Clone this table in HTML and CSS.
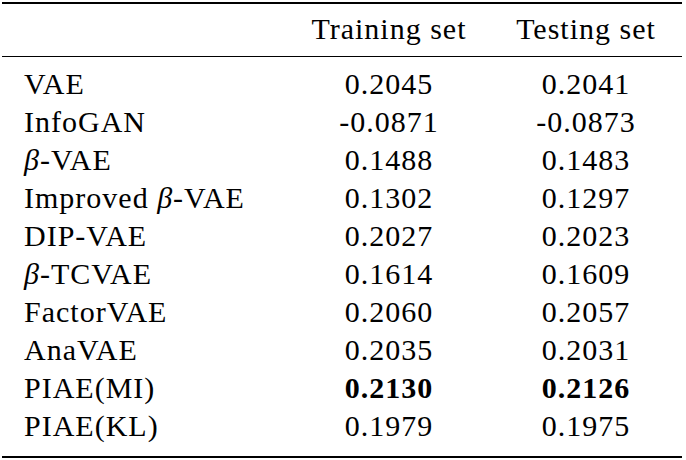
FILE: index.html
```html
<!DOCTYPE html>
<html>
<head>
<meta charset="utf-8">
<link rel="stylesheet" href="styles.css">
</head>
<body>
<div class="results">
  <div class="row head">
    <span class="cell name"></span>
    <span class="cell train">Training set</span>
    <span class="cell test">Testing set</span>
  </div>
  <div class="body">
    <div class="row"><span class="cell name">VAE</span><span class="cell train">0.2045</span><span class="cell test">0.2041</span></div>
    <div class="row"><span class="cell name">InfoGAN</span><span class="cell train">-0.0871</span><span class="cell test">-0.0873</span></div>
    <div class="row"><span class="cell name"><span class="beta">β</span>-VAE</span><span class="cell train">0.1488</span><span class="cell test">0.1483</span></div>
    <div class="row"><span class="cell name">Improved <span class="beta">β</span>-VAE</span><span class="cell train">0.1302</span><span class="cell test">0.1297</span></div>
    <div class="row"><span class="cell name">DIP-VAE</span><span class="cell train">0.2027</span><span class="cell test">0.2023</span></div>
    <div class="row"><span class="cell name"><span class="beta">β</span>-TCVAE</span><span class="cell train">0.1614</span><span class="cell test">0.1609</span></div>
    <div class="row"><span class="cell name">FactorVAE</span><span class="cell train">0.2060</span><span class="cell test">0.2057</span></div>
    <div class="row"><span class="cell name">AnaVAE</span><span class="cell train">0.2035</span><span class="cell test">0.2031</span></div>
    <div class="row"><span class="cell name">PIAE(MI)</span><span class="cell train best">0.2130</span><span class="cell test best">0.2126</span></div>
    <div class="row"><span class="cell name">PIAE(KL)</span><span class="cell train">0.1979</span><span class="cell test">0.1975</span></div>
  </div>
</div>
</body>
</html>
```
FILE: styles.css
```css
html, body {
  margin: 0;
  padding: 0;
  background: #fff;
}
body {
  padding: 2px 0 0 2px;
  font-family: "Liberation Serif", "Times New Roman", serif;
  font-size: 30px;
  letter-spacing: 1px;
  color: #000;
}
.results {
  width: 680px;
  border-top: 2.5px solid #000;
  border-bottom: 2.5px solid #000;
}
.row {
  display: flex;
  line-height: 38px;
  white-space: nowrap;
}
.head {
  padding-top: 6px;
  padding-bottom: 8px;
  border-bottom: 1.5px solid #000;
}
.body {
  padding-top: 8px;
  padding-bottom: 11px;
}
.cell {
  display: block;
  text-align: center;
}
.name {
  width: 286px;
  padding-left: 22px;
  box-sizing: border-box;
  text-align: left;
}
.train { width: 202px; }
.test { width: 192px; }
.best { font-weight: bold; }
.beta { font-style: italic; }
```
